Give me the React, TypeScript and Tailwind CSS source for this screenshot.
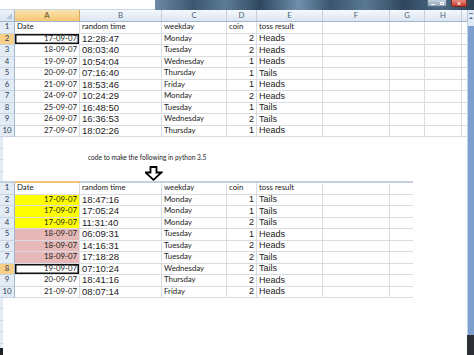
import React from "react";

const rows1 = [
  ["17-09-07", "12:28:47", "Monday", "2", "Heads"],
  ["18-09-07", "08:03:40", "Tuesday", "2", "Heads"],
  ["19-09-07", "10:54:04", "Wednesday", "1", "Heads"],
  ["20-09-07", "07:16:40", "Thursday", "1", "Tails"],
  ["21-09-07", "18:53:46", "Friday", "1", "Heads"],
  ["24-09-07", "10:24:29", "Monday", "2", "Heads"],
  ["25-09-07", "16:48:50", "Tuesday", "1", "Tails"],
  ["26-09-07", "16:36:53", "Wednesday", "2", "Tails"],
  ["27-09-07", "18:02:26", "Thursday", "1", "Heads"],
];

const rows2 = [
  ["17-09-07", "18:47:16", "Monday", "1", "Tails"],
  ["17-09-07", "17:05:24", "Monday", "1", "Tails"],
  ["17-09-07", "11:31:40", "Monday", "2", "Tails"],
  ["18-09-07", "06:09:31", "Tuesday", "1", "Heads"],
  ["18-09-07", "14:16:31", "Tuesday", "2", "Heads"],
  ["18-09-07", "17:18:28", "Tuesday", "2", "Tails"],
  ["19-09-07", "07:10:24", "Wednesday", "2", "Tails"],
  ["20-09-07", "18:41:16", "Thursday", "2", "Heads"],
  ["21-09-07", "08:07:14", "Friday", "2", "Heads"],
];

const cal = "font-['Lato','Open_Sans',sans-serif] text-[7.8px]";
const ari = "font-['Liberation_Sans',Arial,sans-serif] text-[9.5px]";

function RowHead({ n, active }: { n: number; active?: boolean }) {
  return (
    <div
      className={`w-[15px] shrink-0 h-full flex items-center justify-center border-r border-b border-r-[#9eb6ce] border-b-[#c9d5e3] ${cal} text-[7.5px] text-[#2d3f57] ${
        active ? "bg-[#f8cf86]" : "bg-[#e3ebf5]"
      }`}
    >
      {n}
    </div>
  );
}

function DataRow({
  n,
  r,
  activeRow,
  fill,
  lastWide,
}: {
  n: number;
  r: string[];
  activeRow?: boolean;
  fill?: string;
  lastWide: "full" | "short";
}) {
  const cell = "h-full border-r border-b border-[#d9dce1] flex items-center overflow-hidden whitespace-nowrap";
  return (
    <div className="flex h-[11.5px] text-[#222]">
      <RowHead n={n} active={activeRow} />
      <div
        className={`${cell} w-[65px] justify-end pr-[2px] ${cal} ${fill ?? ""} ${
          activeRow ? "shadow-[inset_0_0_0_1.5px_#111]" : ""
        }`}
      >
        {r[0]}
      </div>
      <div className={`${cell} w-[82px] pl-[2px] ${ari}`}>{r[1]}</div>
      <div className={`${cell} w-[65px] pl-[2px] ${cal}`}>{r[2]}</div>
      <div className={`${cell} w-[30px] justify-end pr-[2px] ${ari} text-[9px]`}>{r[3]}</div>
      <div className={`${cell} w-[66px] pl-[2px] ${ari} text-[9px]`}>{r[4]}</div>
      <div className={`${cell} w-[67px]`} />
      {lastWide === "full" ? (
        <>
          <div className={`${cell} w-[35px]`} />
          <div className={`${cell} w-[37px]`} />
          <div className={`${cell} w-[5px] border-r-0`} />
        </>
      ) : (
        <div className={`${cell} w-[23px] border-r-0`} />
      )}
    </div>
  );
}

function HeaderRow({ r, lastWide }: { r: string[]; lastWide: "full" | "short" }) {
  const cell = "h-full border-r border-b border-[#d9dce1] flex items-center overflow-hidden whitespace-nowrap pl-[2px]";
  return (
    <div className={`flex h-[11.5px] text-[#222] ${cal}`}>
      <RowHead n={1} />
      <div className={`${cell} w-[65px]`}>{r[0]}</div>
      <div className={`${cell} w-[82px]`}>{r[1]}</div>
      <div className={`${cell} w-[65px]`}>{r[2]}</div>
      <div className={`${cell} w-[30px]`}>{r[3]}</div>
      <div className={`${cell} w-[66px]`}>{r[4]}</div>
      <div className={`${cell} w-[67px]`} />
      {lastWide === "full" ? (
        <>
          <div className={`${cell} w-[35px]`} />
          <div className={`${cell} w-[37px]`} />
          <div className={`${cell} w-[5px] border-r-0`} />
        </>
      ) : (
        <div className={`${cell} w-[23px] border-r-0`} />
      )}
    </div>
  );
}

const headers = ["Date", "random time", "weekday", "coin", "toss result"];

function ColHeader() {
  const c =
    "h-full flex items-center justify-center border-r border-[#c3cfdd] bg-gradient-to-b from-[#f5f8fc] to-[#dde6f1] text-[#4b5f78]";
  return (
    <div className={`flex h-[12px] border-b border-[#9eb6ce] ${cal} text-[7.5px]`}>
      <div className="w-[15px] h-full bg-gradient-to-b from-[#eef3f9] to-[#d9e3ef] border-r border-[#9eb6ce] relative">
        <div className="absolute right-[2px] bottom-[2px] w-0 h-0 border-l-[6px] border-l-transparent border-b-[6px] border-b-[#b7c6d8]" />
      </div>
      <div className="w-[65px] h-full flex items-center justify-center border-r border-[#d7a95c] bg-gradient-to-b from-[#fbe3b0] to-[#f5c76f] text-[#5a4a2a]">
        A
      </div>
      <div className={`${c} w-[82px]`}>B</div>
      <div className={`${c} w-[65px]`}>C</div>
      <div className={`${c} w-[30px]`}>D</div>
      <div className={`${c} w-[66px]`}>E</div>
      <div className={`${c} w-[67px]`}>F</div>
      <div className={`${c} w-[35px]`}>G</div>
      <div className={`${c} w-[37px]`}>H</div>
      <div className={`${c} w-[5px] border-r-0`} />
    </div>
  );
}

function TitleBar() {
  return (
    <div className="flex h-[10px] shrink-0">
      <div className="w-[155px] h-full bg-white border-b border-[#c9d6e6]" />
      <div className="flex-1 h-full relative bg-[linear-gradient(90deg,#6d8aa4_0%,#3b5770_12%,#5d7b95_22%,#2f4860_33%,#6f8fac_45%,#3a566e_55%,#5a7893_66%,#2e475e_78%,#4c6a85_90%,#2a3f52_100%)]">
        <div className="absolute right-[27px] top-0 w-[20px] h-[7px] rounded-b-[2px] bg-gradient-to-b from-[#c5d2de] to-[#8fa3b6] border border-t-0 border-[#56708a] flex">
          <div className="w-1/2 flex items-center justify-center">
            <div className="w-[4px] h-[1px] bg-white mt-[2px]" />
          </div>
          <div className="w-1/2 flex items-center justify-center">
            <div className="w-[4px] h-[3px] border border-white" />
          </div>
        </div>
        <div className="absolute right-[7px] top-0 w-[16px] h-[7px] rounded-b-[2px] bg-gradient-to-b from-[#e58a7c] to-[#c2392b] border border-t-0 border-[#7a2a22] flex items-center justify-center text-white text-[6px] leading-none font-bold font-['Liberation_Sans',sans-serif]">
          x
        </div>
      </div>
    </div>
  );
}

function Scrollbar() {
  return (
    <div className="w-[7px] flex flex-col shrink-0">
      <div className="h-[16px] bg-[#e2eaf5] border-l border-[#b9c9dd] flex flex-col items-center pt-[3px] gap-[3px]">
        <div className="w-[4px] h-[1px] bg-[#5b7aa6]" />
        <div className="w-0 h-0 border-l-[2px] border-l-transparent border-r-[2px] border-r-transparent border-b-[2px] border-b-[#3d5f8f]" />
      </div>
      <div className="flex-1 bg-[#7d9fcd] border-l border-[#c3d3e8]" />
      <div className="h-[20px] bg-[#2b2f33]" />
    </div>
  );
}

function LeftStrip({ dark }: { dark?: boolean }) {
  return (
    <div className="w-[3px] shrink-0 flex flex-col">
      <div className="flex-1 bg-[repeating-linear-gradient(180deg,#e3ebf5_0px,#e3ebf5_10.5px,#c9d5e3_10.5px,#c9d5e3_11.5px)]" />
      {dark && <div className="h-[7px] bg-[#1f2326]" />}
    </div>
  );
}

export default function App() {
  return (
    <div className="w-[474px] h-[355px] overflow-hidden bg-white flex flex-col">
      <TitleBar />
      <div className="flex flex-1 min-h-0">
        <div className="flex-1 flex flex-col min-w-0">
          <ColHeader />
          <HeaderRow r={headers} lastWide="full" />
          {rows1.map((r, i) => (
            <DataRow key={i} n={i + 2} r={r} activeRow={i === 0} lastWide="full" />
          ))}
          <div className="flex h-[44px]">
            <LeftStrip />
            <div className="flex-1 relative">
              <div className="absolute left-[85px] top-[17px] font-['Lato','Open_Sans',sans-serif] text-[6.6px] text-[#222] whitespace-nowrap leading-none">
                code to make the following in python 3.5
              </div>
              <svg className="absolute left-[142px] top-[29px]" width="18" height="15" viewBox="0 0 18 15">
                <polygon
                  points="5.5,1 11.5,1 11.5,6.5 16.5,6.5 8.5,13.8 0.5,6.5 5.5,6.5"
                  fill="white"
                  stroke="#000"
                  strokeWidth="1.8"
                  strokeLinejoin="miter"
                />
              </svg>
            </div>
          </div>
          <div className="w-[413px] flex h-[2px]">
            <div className="w-[15px] bg-[#c6cfda]" />
            <div className="w-[65px] bg-[#f0c27a]" />
            <div className="flex-1 bg-[#c6cfda]" />
          </div>
          <div className="w-[413px]">
            <HeaderRow r={headers} lastWide="short" />
            {rows2.map((r, i) => (
              <DataRow
                key={i}
                n={i + 2}
                r={r}
                activeRow={i === 6}
                fill={i < 3 ? "bg-[#ffff00]" : i < 6 ? "bg-[#e6b9b8]" : undefined}
                lastWide="short"
              />
            ))}
          </div>
          <div className="flex flex-1">
            <LeftStrip dark />
            <div className="flex-1" />
          </div>
        </div>
        <Scrollbar />
      </div>
    </div>
  );
}
